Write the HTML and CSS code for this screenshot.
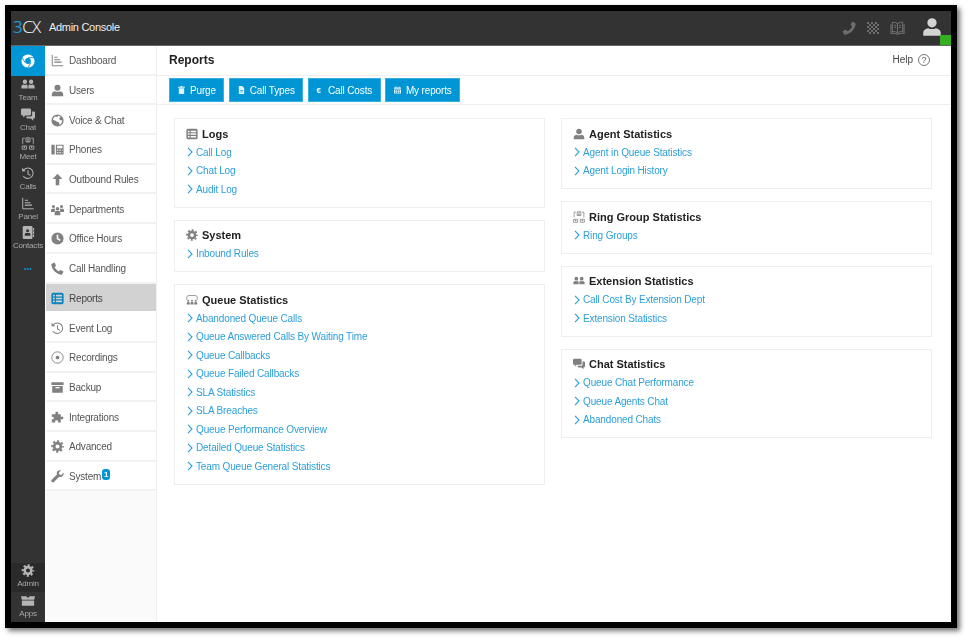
FILE: index.html
```html
<!DOCTYPE html>
<html lang="en">
<head>
<meta charset="utf-8">
<title>Reports - 3CX Admin Console</title>
<link rel="stylesheet" href="styles.css">
</head>
<body>
<svg class="defs" width="0" height="0" aria-hidden="true">
  <symbol id="i-dash" viewBox="0 0 16 16"><path d="M1.500 1v13.500H15" fill="none" stroke="currentColor" stroke-width="1.200"/><path d="M4 4h4M4 7h7M4 10h9" fill="none" stroke="currentColor" stroke-width="1.300"/></symbol>
  <symbol id="i-user" viewBox="0 0 16 16"><circle cx="8" cy="4.600" r="3.700"/><path d="M1 15v-2.200C1 10.400 3 9.300 5 9c1 .9 5 .9 6 0 2 .3 4 1.400 4 3.800V15z"/></symbol>
  <symbol id="i-team" viewBox="0 0 18 14"><circle cx="5" cy="3.500" r="2.800"/><circle cx="13" cy="3.500" r="2.800"/><path d="M.5 12V9.500C.5 8 2 7.300 3 7c1 .7 3 .7 4 0 1 .3 1.500 1 1.500 2.500V12zM9.500 12V9.500C9.500 8 10 7.300 11 7c1 .7 3 .7 4 0 1 .3 2.500 1 2.500 2.500V12z"/></symbol>
  <symbol id="i-globe" viewBox="0 0 16 16"><path fill-rule="evenodd" d="M8 .5a7.500 7.500 0 1 0 0 15 7.500 7.500 0 0 0 0-15zM5 3l3 .5L9.500 2l2.500 1.500-2 2 1 2 3 .5-1 3-2.500 2.500-.5-3-2.500-1L5 8 2.500 7.500 3 5z"/></symbol>
  <symbol id="i-phones" viewBox="0 0 16 16"><path fill-rule="evenodd" d="M.5 2h4v12h-4zM6 2h9.500v12H6zm1.500 1.500v3h6.500v-3zm0 4.500v1.500H9V8zm3 0v1.500H12V8zm3 0v1.500H14V8zm-6 3v1.500H9V11zm3 0v1.500H12V11zm3 0v1.500H14V11z"/></symbol>
  <symbol id="i-up" viewBox="0 0 16 16"><path d="M8 1l6 6.500h-3.800V15H5.800V7.500H2z"/></symbol>
  <symbol id="i-dept" viewBox="0 0 16 14"><circle cx="3" cy="3.400" r="1.900"/><circle cx="13" cy="3.400" r="1.900"/><circle cx="8" cy="6.200" r="2.200"/><path d="M0 10V7.800C0 6.500 1 6 2 6h2c.5 0 1 .2 1.200.5L4.500 10zM16 10V7.800C16 6.500 15 6 14 6h-2c-.5 0-1 .2-1.200.5l.7 3.500zM4.500 14v-3c0-1.500 1-2.200 2-2.200h3c1 0 2 .7 2 2.200v3z"/></symbol>
  <symbol id="i-clock" viewBox="0 0 16 16"><path fill-rule="evenodd" d="M8 .5a7.500 7.500 0 1 0 0 15 7.500 7.500 0 0 0 0-15zM7 3.500h2v4.200l3 1.800-1 1.600-4-2.400z"/></symbol>
  <symbol id="i-call" viewBox="0 0 16 16"><path d="M1 2.300L3.600.8c.5-.2.900 0 1.100.4L6 4c.2.400.1.800-.2 1.100L4.400 6.300c.9 2.200 3 4.400 5.300 5.300l1.200-1.400c.3-.3.7-.4 1.100-.2l2.800 1.300c.4.200.6.700.4 1.100l-1.500 2.600c-.3.500-.8.700-1.300.6C6.500 14.700 1.300 9.500.4 3.600c-.1-.5.100-1 .6-1.300z"/></symbol>
  <symbol id="i-list" viewBox="0 0 16 16"><path fill-rule="evenodd" d="M2.500 1h11A2 2 0 0 1 15.500 3v10a2 2 0 0 1-2 2h-11a2 2 0 0 1-2-2V3a2 2 0 0 1 2-2zM2.500 3.500v2h2.200v-2zm3.700 0v2h7.300v-2zM2.500 7v2h2.200V7zm3.700 0v2h7.300V7zM2.500 10.500v2h2.200v-2zm3.700 0v2h7.300v-2z"/></symbol>
  <symbol id="i-hist" viewBox="0 0 16 16"><path d="M3 3.200A6.500 6.500 0 1 1 2.200 11" fill="none" stroke="currentColor" stroke-width="1.300"/><path d="M.6 1l.3 4.500 4.300-.4z" fill="currentColor"/><path d="M8 4v4.500l3 1.800" fill="none" stroke="currentColor" stroke-width="1.300"/></symbol>
  <symbol id="i-rec" viewBox="0 0 16 16"><circle cx="8" cy="8" r="7" fill="none" stroke="currentColor" stroke-width="1.100"/><circle cx="8" cy="8" r="2.300"/></symbol>
  <symbol id="i-box" viewBox="0 0 16 16"><path fill-rule="evenodd" d="M.5 1.500h15v3.500H.5zM1.500 6h13v8.500h-13zM5.500 7.500v1.500h5V7.500z"/></symbol>
  <symbol id="i-puzzle" viewBox="0 0 16 16"><path d="M6 1.200c1.300-.9 3-.2 3 1.100 0 .8-.5 1-.5 1.700H12v3.300c.7 0 1-.5 1.800-.5 1.200 0 1.900 1.500 1.200 2.800-.6 1-2 .6-3 .3V14H8.500c.3-1 .4-1.800-.7-2.300-1.300-.6-2.800 0-2.800 1.200 0 .5.300.8.500 1.100H1V10c.8.300 1.500.5 2 0 .9-.8.500-2.800-.9-2.800-.4 0-.8.200-1.100.4V4h4.500c0-1-.5-2 .5-2.800z"/></symbol>
  <symbol id="i-gear" viewBox="0 0 16 16"><circle cx="8" cy="8" r="4.100" fill="none" stroke="currentColor" stroke-width="3.200"/><circle cx="8" cy="8" r="6.500" fill="none" stroke="currentColor" stroke-width="2.600" stroke-dasharray="2.552 2.552" stroke-dashoffset="1.276"/></symbol>
  <symbol id="i-wrench" viewBox="0 0 16 16"><path d="M15.500 3.500l-2.800 2.700-2.400-.6-.6-2.400L12.400.5C10.400-.1 8 .7 7.300 2.700c-.3 1-.3 2 .1 2.900L.9 12c-.9.900-.5 2.100 0 2.700.6.600 1.900.9 2.700 0l6.400-6.500c.9.400 2 .4 3 .1 2-.7 3-3 2.500-4.800z"/></symbol>
  <symbol id="i-chat" viewBox="0 0 16 14"><path d="M1.500 0h8.500A1.500 1.500 0 0 1 11.500 1.500v5A1.500 1.500 0 0 1 10 8H5L2.500 10.300V8h-1A1.500 1.500 0 0 1 0 6.500v-5A1.500 1.500 0 0 1 1.500 0z"/><path d="M12.700 3.500h1.800A1.500 1.500 0 0 1 16 5v5a1.500 1.500 0 0 1-1.500 1.500H14V14l-2.700-2.500H7.500A1.500 1.500 0 0 1 6 10V9.200h5a1.700 1.700 0 0 0 1.700-1.700z"/></symbol>
  <symbol id="i-meet" viewBox="0 0 16 16"><path d="M4 1.500H1.500v7M12 1.500h2.500v7M5.500 1h5v5h-5z" fill="none" stroke="currentColor" stroke-width="1"/><circle cx="8" cy="2.800" r="1"/><path d="M6.300 5.700c0-2 3.400-2 3.400 0z"/><path d="M.8 15v-4h5.400v4zM9.800 15v-4h5.400v4z" fill="none" stroke="currentColor" stroke-width="1"/><circle cx="3.500" cy="12.500" r="1"/><circle cx="12.500" cy="12.500" r="1"/></symbol>
  <symbol id="i-contact" viewBox="0 0 16 16"><path fill-rule="evenodd" d="M3 0h9a1.500 1.500 0 0 1 1.500 1.500v13A1.500 1.500 0 0 1 12 16H3a1.500 1.500 0 0 1-1.500-1.500v-13A1.500 1.500 0 0 1 3 0zm4.500 4a1.900 1.900 0 1 0 0 3.800 1.900 1.900 0 0 0 0-3.800zM4 12h7v-1.500c0-1.300-1-1.800-2-1.800H6c-1 0-2 .5-2 1.800z"/><path d="M14 2.500h1.500v3H14zM14 6.500h1.500v3H14zM14 10.500h1.500v3H14z"/></symbol>
  <symbol id="i-apps" viewBox="0 0 16 12"><path d="M0 1h6l2 2 2-2h6l-1 4H1zM1 6h14v6H1z"/></symbol>
  <symbol id="i-queue" viewBox="0 0 16 14"><path d="M1 7V3.500A2.500 2.500 0 0 1 3.500 1h9A2.500 2.500 0 0 1 15 3.500V7" fill="none" stroke="currentColor" stroke-width="1"/><circle cx="3" cy="8" r="1.300"/><circle cx="8" cy="8" r="1.300"/><circle cx="13" cy="8" r="1.300"/><path d="M1 13v-2c0-1 1-1.300 2-1.300s2 .3 2 1.300v2zM6 13v-2c0-1 1-1.300 2-1.300s2 .3 2 1.300v2zM11 13v-2c0-1 1-1.300 2-1.300s2 .3 2 1.300v2z"/></symbol>
  <symbol id="i-chev" viewBox="0 0 6 10"><path d="M1 .8L5 5 1 9.200" fill="none" stroke="currentColor" stroke-width="1.100"/></symbol>
  <symbol id="i-trash" viewBox="0 0 10 12"><path d="M3.500 0h3v1H10v1.500H0V1h3.500zM1 3.200h8V12H1z"/></symbol>
  <symbol id="i-file" viewBox="0 0 10 12"><path fill-rule="evenodd" d="M1 0h5l3 3v9H1zM3 6.500v1h4v-1zm0 2v1h4v-1z"/></symbol>
  <symbol id="i-cal" viewBox="0 0 12 12"><path fill-rule="evenodd" d="M2.500 0h1.500v1.500h4V0h1.500v1.500H12V4H0V1.500h2.500zM0 5h12v7H0zm2 1.500v1.500h2V6.500zm3 0v1.500h2V6.500zm3 0v1.500h2V6.500zm-6 2.500v1.500h2V9zm3 0v1.500h2V9zm3 0v1.500h2V9z"/></symbol>
  <symbol id="i-qr" viewBox="0 0 12 12"><path d="M0 0h2v2H0zM4 0h2v2H4zM8 0h2v2H8zM2 2h2v2H2zM6 2h2v2H6zM10 2h2v2h-2zM0 4h2v2H0zM4 4h2v2H4zM8 4h2v2H8zM2 6h2v2H2zM6 6h2v2H6zM10 6h2v2h-2zM0 8h2v2H0zM4 8h2v2H4zM8 8h2v2H8zM2 10h2v2H2zM6 10h2v2H6zM10 10h2v2h-2z"/></symbol>
  <symbol id="i-book" viewBox="0 0 16 14"><path d="M8 2.500C6.500 1 4 .8 2.500 1.200V11C4 10.700 6.500 11 8 12.300 9.500 11 12 10.700 13.500 11V1.200C12 .8 9.500 1 8 2.500zM8 2.500V12.300M4.300 4c.9 0 1.700.2 2.200.7M4.300 6.200c.9 0 1.700.2 2.200.7M9.500 4.700c.5-.5 1.300-.7 2.200-.7M9.500 6.900c.5-.5 1.300-.7 2.200-.7M1 3v9.800c2-.4 5 0 7 1 2-1 5-1.400 7-1V3" fill="none" stroke="currentColor" stroke-width="1.100"/></symbol>
</svg>

<div class="window">
  <header class="topbar">
    <div class="brand"><span class="logo"><span class="logo-3">3</span>CX</span><span class="title">Admin Console</span></div>
    <div class="top-actions">
      <svg class="top-ic call"><use href="#i-call"/></svg>
      <svg class="top-ic qr"><use href="#i-qr"/></svg>
      <svg class="top-ic book"><use href="#i-book"/></svg>
      <span class="avatar"><svg class="avatar-ic"><use href="#i-user"/></svg><span class="status"></span></span>
    </div>
  </header>
  <div class="body">
    <nav class="rail">
      <a class="rail-home"><svg class="chrome" viewBox="0 0 16 16"><circle cx="8" cy="8" r="7.500" fill="#fff"/><circle cx="8" cy="8" r="3.300" fill="#0096d6"/><path d="M8 4.200h7M4.700 9.900L1.300 4M11.300 9.900L8 15.500" fill="none" stroke="#0096d6" stroke-width="1"/></svg></a>
      <a class="rail-item"><svg class="rail-ic"><use href="#i-team"/></svg><span>Team</span></a>
      <a class="rail-item"><svg class="rail-ic"><use href="#i-chat"/></svg><span>Chat</span></a>
      <a class="rail-item"><svg class="rail-ic"><use href="#i-meet"/></svg><span>Meet</span></a>
      <a class="rail-item"><svg class="rail-ic"><use href="#i-hist"/></svg><span>Calls</span></a>
      <a class="rail-item"><svg class="rail-ic"><use href="#i-dash"/></svg><span>Panel</span></a>
      <a class="rail-item"><svg class="rail-ic"><use href="#i-contact"/></svg><span>Contacts</span></a>
      <a class="rail-more">•••</a>
      <div class="rail-bottom">
        <a class="rail-item admin"><svg class="rail-ic"><use href="#i-gear"/></svg><span>Admin</span></a>
        <a class="rail-item"><svg class="rail-ic"><use href="#i-apps"/></svg><span>Apps</span></a>
      </div>
    </nav>
    <aside class="side">
      <a class="side-item"><svg class="side-ic"><use href="#i-dash"/></svg>Dashboard</a>
      <a class="side-item"><svg class="side-ic"><use href="#i-user"/></svg>Users</a>
      <a class="side-item"><svg class="side-ic"><use href="#i-globe"/></svg>Voice &amp; Chat</a>
      <a class="side-item"><svg class="side-ic"><use href="#i-phones"/></svg>Phones</a>
      <a class="side-item"><svg class="side-ic"><use href="#i-up"/></svg>Outbound Rules</a>
      <a class="side-item"><svg class="side-ic"><use href="#i-dept"/></svg>Departments</a>
      <a class="side-item"><svg class="side-ic"><use href="#i-clock"/></svg>Office Hours</a>
      <a class="side-item"><svg class="side-ic"><use href="#i-call"/></svg>Call Handling</a>
      <a class="side-item active"><svg class="side-ic"><use href="#i-list"/></svg>Reports</a>
      <a class="side-item"><svg class="side-ic"><use href="#i-hist"/></svg>Event Log</a>
      <a class="side-item"><svg class="side-ic"><use href="#i-rec"/></svg>Recordings</a>
      <a class="side-item"><svg class="side-ic"><use href="#i-box"/></svg>Backup</a>
      <a class="side-item"><svg class="side-ic"><use href="#i-puzzle"/></svg>Integrations</a>
      <a class="side-item"><svg class="side-ic"><use href="#i-gear"/></svg>Advanced</a>
      <a class="side-item"><svg class="side-ic"><use href="#i-wrench"/></svg>System<span class="badge">1</span></a>
    </aside>
    <main class="main">
      <div class="page-head"><h1>Reports</h1><a class="help">Help<span class="help-ic">?</span></a></div>
      <div class="toolbar">
        <a class="btn"><svg class="btn-ic"><use href="#i-trash"/></svg>Purge</a>
        <a class="btn"><svg class="btn-ic"><use href="#i-file"/></svg>Call Types</a>
        <a class="btn"><span class="btn-euro">€</span>Call Costs</a>
        <a class="btn"><svg class="btn-ic"><use href="#i-cal"/></svg>My reports</a>
      </div>
      <div class="columns">
        <div class="col col-left">
          <section class="card">
            <h2><svg class="card-ic"><use href="#i-list"/></svg>Logs</h2>
            <a class="link"><svg class="chev"><use href="#i-chev"/></svg>Call Log</a>
            <a class="link"><svg class="chev"><use href="#i-chev"/></svg>Chat Log</a>
            <a class="link"><svg class="chev"><use href="#i-chev"/></svg>Audit Log</a>
          </section>
          <section class="card">
            <h2><svg class="card-ic"><use href="#i-gear"/></svg>System</h2>
            <a class="link"><svg class="chev"><use href="#i-chev"/></svg>Inbound Rules</a>
          </section>
          <section class="card">
            <h2><svg class="card-ic"><use href="#i-queue"/></svg>Queue Statistics</h2>
            <a class="link"><svg class="chev"><use href="#i-chev"/></svg>Abandoned Queue Calls</a>
            <a class="link"><svg class="chev"><use href="#i-chev"/></svg>Queue Answered Calls By Waiting Time</a>
            <a class="link"><svg class="chev"><use href="#i-chev"/></svg>Queue Callbacks</a>
            <a class="link"><svg class="chev"><use href="#i-chev"/></svg>Queue Failed Callbacks</a>
            <a class="link"><svg class="chev"><use href="#i-chev"/></svg>SLA Statistics</a>
            <a class="link"><svg class="chev"><use href="#i-chev"/></svg>SLA Breaches</a>
            <a class="link"><svg class="chev"><use href="#i-chev"/></svg>Queue Performance Overview</a>
            <a class="link"><svg class="chev"><use href="#i-chev"/></svg>Detailed Queue Statistics</a>
            <a class="link"><svg class="chev"><use href="#i-chev"/></svg>Team Queue General Statistics</a>
          </section>
        </div>
        <div class="col col-right">
          <section class="card">
            <h2><svg class="card-ic"><use href="#i-user"/></svg>Agent Statistics</h2>
            <a class="link"><svg class="chev"><use href="#i-chev"/></svg>Agent in Queue Statistics</a>
            <a class="link"><svg class="chev"><use href="#i-chev"/></svg>Agent Login History</a>
          </section>
          <section class="card">
            <h2><svg class="card-ic"><use href="#i-meet"/></svg>Ring Group Statistics</h2>
            <a class="link"><svg class="chev"><use href="#i-chev"/></svg>Ring Groups</a>
          </section>
          <section class="card">
            <h2><svg class="card-ic"><use href="#i-team"/></svg>Extension Statistics</h2>
            <a class="link"><svg class="chev"><use href="#i-chev"/></svg>Call Cost By Extension Dept</a>
            <a class="link"><svg class="chev"><use href="#i-chev"/></svg>Extension Statistics</a>
          </section>
          <section class="card">
            <h2><svg class="card-ic"><use href="#i-chat"/></svg>Chat Statistics</h2>
            <a class="link"><svg class="chev"><use href="#i-chev"/></svg>Queue Chat Performance</a>
            <a class="link"><svg class="chev"><use href="#i-chev"/></svg>Queue Agents Chat</a>
            <a class="link"><svg class="chev"><use href="#i-chev"/></svg>Abandoned Chats</a>
          </section>
        </div>
      </div>
    </main>
  </div>
</div>
</body>
</html>
```
FILE: styles.css
```css
* { box-sizing: border-box; }
html, body { margin: 0; height: 100%; background: #fff; overflow: hidden; }
body { padding: 5px; font-family: "Liberation Sans", Arial, sans-serif; color: #444; }
.defs { position: absolute; }
svg { fill: currentColor; display: block; flex: none; }

.window {
  width: 952px; height: 623px;
  border: 6px solid #000;
  box-shadow: 3px 3px 5px rgba(0,0,0,.55);
  background: #fff;
  display: flex; flex-direction: column;
  filter: blur(.3px);
}

.topbar {
  height: 35px; flex: none;
  background: #333; border-bottom: 1px solid #666;
  display: flex; align-items: center; justify-content: space-between;
  color: #fff;
}
.brand { display: flex; align-items: center; padding: 0 0 3px 2px; }
.logo { width: 36px; font-family: "Open Sans", sans-serif; font-size: 17px; letter-spacing: -.6px; font-weight: 300; color: #fff; }
.logo-3 { color: #1d9ad6; font-weight: 400; }
.title { font-size: 11px; letter-spacing: -.3px; color: #eee; }
.top-actions { display: flex; align-items: center; height: 100%; color: #6e6e6e; }
.top-ic { width: 14px; height: 14px; }
.call { margin-right: 11px; transform: scaleX(-1); }
.qr { width: 12px; height: 12px; margin-right: 11px; }
.book { width: 15px; height: 14px; margin-right: 17px; }
.avatar { position: relative; width: 29px; height: 34px; display: block; }
.avatar-ic { width: 20px; height: 20px; color: #d4d4d4; position: absolute; left: 0; top: 6px; }
.status { position: absolute; right: 0; bottom: 0; width: 11px; height: 10px; background: #35b11f; }

.body { flex: 1; display: flex; min-height: 0; }

.rail { width: 34px; flex: none; background: #333; display: flex; flex-direction: column; color: #b4b4b4; }
.rail-home { height: 30px; background: #0096d6; display: flex; align-items: center; justify-content: center; flex: none; }
.chrome { width: 14px; height: 14px; }
.rail-item { height: 29.700px; display: flex; flex-direction: column; align-items: center; justify-content: center; flex: none; padding-bottom: 2px; }
.rail-item span { font-size: 8px; line-height: 9px; color: #a8a8a8; letter-spacing: -.2px; }
.rail-ic { width: 14px; height: 13px; margin-bottom: 2px; }
.rail-more { color: #0096d6; font-size: 7px; letter-spacing: .3px; text-align: center; margin-top: 11px; line-height: 8px; }
.rail-bottom { margin-top: auto; }
.admin { background: #2a2a2a; }

.side { width: 112px; flex: none; background: #fafafa; border-left: 1px solid #fff; border-right: 1px solid #eee; }
.side-item {
  height: 29.700px; display: flex; align-items: center;
  font-size: 10px; letter-spacing: -.2px; color: #555; background: #fff;
  border-bottom: 2px solid #f2f2f2; padding: 2px 0 0 5px;
}
.side-ic { width: 13px; height: 13px; margin-right: 5px; color: #808080; }
.side-item.active { background: #d2d2d2; border-bottom-color: #fff; color: #444; }
.side-item.active .side-ic { color: #0a84bd; }
.badge {
  align-self: flex-start; margin-top: 5px; margin-left: 1px;
  width: 8px; height: 11px; border-radius: 3px; background: #0096d6;
  color: #fff; font-size: 8px; font-weight: 700; line-height: 11px; text-align: center;
}

.main { flex: 1; min-width: 0; display: flex; flex-direction: column; }
.page-head { height: 30px; flex: none; display: flex; align-items: center; justify-content: space-between; padding: 0 21px 2px 12px; border-bottom: 1px solid #eee; }
h1 { margin: 0; font-size: 12px; font-weight: 700; color: #222; }
.help { display: flex; align-items: center; font-size: 10px; color: #444; }
.help-ic { width: 12px; height: 12px; margin-left: 5px; border: 1px solid #777; border-radius: 50%; font-size: 9px; line-height: 10px; text-align: center; color: #666; }
.toolbar { height: 29px; flex: none; display: flex; gap: 4.300px; padding: 2px 0 0 12px; border-bottom: 1px solid #eee; }
.btn { height: 24px; padding: 0 7.500px 0 8px; display: flex; align-items: center; background: #0096d6; color: #fff; font-size: 10px; letter-spacing: -.15px; border: 1px solid #39aee0; }
.btn-ic { width: 7px; height: 8px; margin-right: 5px; color: #e4f2f8; }
.btn-euro { font-size: 8px; font-weight: 700; margin-right: 5.500px; width: 6px; }

.columns { display: grid; grid-template-columns: 371px 371px; gap: 16px; padding: 13px 0 0 17px; }
.col { display: flex; flex-direction: column; }
.col-left { gap: 12px; }
.col-right { gap: 12px; }
.card { border: 1px solid #eee; padding: 5px 12px 8px 11px; background: #fff; }
h2 { margin: 0; height: 19px; font-size: 11px; font-weight: 700; color: #222; display: flex; align-items: center; }
.card-ic { width: 12px; height: 12px; margin-right: 4px; color: #808080; }
.link { display: flex; align-items: center; height: 18.500px; font-size: 10px; letter-spacing: -.14px; color: #2d9fd8; }
.chev { width: 6px; height: 10px; margin: 0 3px 0 1px; color: #2d9fd8; }
```
